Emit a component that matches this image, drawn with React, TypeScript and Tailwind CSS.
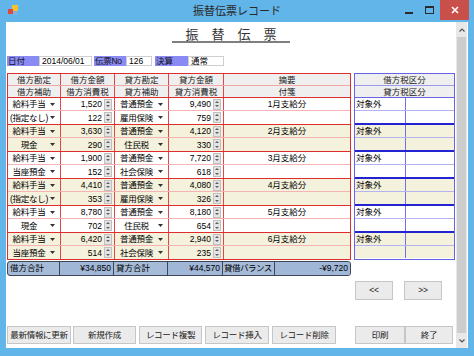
import React from 'react';

type Group = {
  dr: string;
  drAmt: string;
  cr: string;
  crAmt: string;
  memo: string;
  dr2: string;
  drTax: string;
  cr2: string;
  crTax: string;
};

const groups: Group[] = [
  { dr: '給料手当', drAmt: '1,520', cr: '普通預金', crAmt: '9,490', memo: '1月支給分', dr2: '(指定なし)', drTax: '122', cr2: '雇用保険', crTax: '759' },
  { dr: '給料手当', drAmt: '3,630', cr: '普通預金', crAmt: '4,120', memo: '2月支給分', dr2: '現金', drTax: '290', cr2: '住民税', crTax: '330' },
  { dr: '給料手当', drAmt: '1,900', cr: '普通預金', crAmt: '7,720', memo: '3月支給分', dr2: '当座預金', drTax: '152', cr2: '社会保険', crTax: '618' },
  { dr: '給料手当', drAmt: '4,410', cr: '普通預金', crAmt: '4,080', memo: '4月支給分', dr2: '(指定なし)', drTax: '353', cr2: '雇用保険', crTax: '326' },
  { dr: '給料手当', drAmt: '8,780', cr: '普通預金', crAmt: '8,180', memo: '5月支給分', dr2: '現金', drTax: '702', cr2: '住民税', crTax: '654' },
  { dr: '給料手当', drAmt: '6,420', cr: '普通預金', crAmt: '2,940', memo: '6月支給分', dr2: '当座預金', drTax: '514', cr2: '社会保険', crTax: '235' },
];

function Combo({ text, w }: { text: string; w: string }) {
  return (
    <div className={`${w} h-full flex items-center border-r border-[#e04848] pl-[1px] pr-[5px]`}>
      <span className="flex-1 text-center whitespace-nowrap tracking-[-0.3px]">{text}</span>
      <svg width="5" height="3" viewBox="0 0 5 3" className="shrink-0 ml-[1px]">
        <path d="M0 0h5L2.5 3z" fill="#333" />
      </svg>
    </div>
  );
}

function Spin() {
  return (
    <div className="w-[8px] h-[11px] flex flex-col border border-[#c0c0c0] bg-[#e4e4e4]">
      <div className="flex-1 flex items-center justify-center">
        <svg width="4" height="2" viewBox="0 0 4 2">
          <path d="M0 2L2 0L4 2z" fill="#606060" />
        </svg>
      </div>
      <div className="flex-1 flex items-center justify-center">
        <svg width="4" height="2" viewBox="0 0 4 2">
          <path d="M0 0h4L2 2z" fill="#606060" />
        </svg>
      </div>
    </div>
  );
}

function Amount({ value, w }: { value: string; w: string }) {
  return (
    <div className={`${w} h-full flex items-center justify-end gap-[2px] pr-[2px] border-r border-[#e04848]`}>
      <span>{value}</span>
      <Spin />
    </div>
  );
}

function Btn({ label, w }: { label: string; w: string }) {
  return (
    <button className={`${w} h-full flex items-center justify-center bg-[#ebebeb] border border-[#c6c6c6] text-[8.5px] text-[#222] whitespace-nowrap tracking-[-0.3px]`}>
      {label}
    </button>
  );
}

export default function App() {
  return (
    <div className="w-[474px] h-[356px] bg-[#62b5e9] flex flex-col overflow-hidden font-['Liberation_Sans','Noto_Sans_CJK_JP',sans-serif] text-[8.5px] text-black">
      {/* Title bar */}
      <div className="h-[22px] grid grid-cols-[1fr_auto_1fr] items-start">
        <div className="pl-[8px] pt-[5px]">
          <svg width="11" height="11" viewBox="0 0 11 11">
            <rect x="4" y="0" width="6" height="6" fill="#f4c430" />
            <rect x="0" y="4" width="5" height="5" fill="#e0483c" />
            <rect x="5" y="6" width="4" height="4" fill="#7fb2e0" />
          </svg>
        </div>
        <div className="pt-[5px] text-[11px] leading-[12px] text-[#2a2a2a]">振替伝票レコード</div>
        <div className="flex justify-end pr-[5px]">
          <div className="w-[21px] h-[20px] flex items-center justify-center">
            <svg width="8" height="8" viewBox="0 0 8 8">
              <rect x="0" y="6" width="8" height="2" fill="#2a2a2a" />
            </svg>
          </div>
          <div className="w-[21px] h-[20px] flex items-center justify-center">
            <svg width="9" height="8" viewBox="0 0 9 8">
              <rect x="0.5" y="0.5" width="8" height="7" fill="none" stroke="#2a2a2a" />
              <rect x="0" y="0" width="9" height="2" fill="#2a2a2a" />
            </svg>
          </div>
          <div className="w-[29px] h-[20px] bg-[#c9504a] flex items-center justify-center">
            <svg width="8" height="8" viewBox="0 0 8 8">
              <path d="M1 1L7 7M7 1L1 7" stroke="#fff" strokeWidth="1.6" />
            </svg>
          </div>
        </div>
      </div>

      {/* Client area */}
      <div className="flex-1 flex mx-[6px] mb-[8px] bg-white min-h-0">
        <div className="flex-1 flex flex-col pl-[1px]">
          {/* Heading */}
          <div className="flex justify-center pt-[5px] pr-[1px]">
            <div className="pl-[13px] border-b-2 border-[#7f7f7f] text-[13px] leading-[14px] tracking-[13px] text-[#333] font-['Noto_Sans_CJK_JP',sans-serif]">
              振替伝票
            </div>
          </div>

          {/* Header fields */}
          <div className="mt-[13px] h-[10px] flex items-stretch leading-[10px]">
            <div className="w-[32px] bg-[#8a8af4] pl-[1px] text-[#111]">日付</div>
            <div className="w-[53px] border border-[#cfcfcf] pl-[2px] leading-[8px]">2014/06/01</div>
            <div className="w-[32px] ml-[2px] bg-[#8a8af4] pl-[1px] text-[#111] tracking-[-0.3px]">伝票No</div>
            <div className="w-[26px] border border-[#cfcfcf] pl-[2px] leading-[8px]">126</div>
            <div className="w-[33px] ml-[3px] bg-[#8a8af4] pl-[1px] text-[#111]">決算</div>
            <div className="w-[36px] border border-[#cfcfcf] pl-[2px] leading-[8px]">通常</div>
          </div>

          {/* Tables */}
          <div className="mt-[7px] flex gap-[3px] leading-[12px]">
            {/* Left (red) table */}
            <div className="w-[344px] flex flex-col border border-[#e02c2c]">
              <div className="h-[12px] flex bg-[#efefef] border-b border-[#f2a6a6] text-[#222]">
                <div className="w-[53px] text-center border-r border-[#e04848]">借方勘定</div>
                <div className="w-[54px] text-center border-r border-[#e04848]">借方金額</div>
                <div className="w-[54px] text-center border-r border-[#e04848]">貸方勘定</div>
                <div className="w-[55px] text-center border-r border-[#e04848]">貸方金額</div>
                <div className="flex-1 text-center">摘要</div>
              </div>
              <div className="h-[12px] flex bg-[#efefef] border-b border-[#e02c2c] text-[#222]">
                <div className="w-[53px] text-center border-r border-[#e04848]">借方補助</div>
                <div className="w-[54px] text-center border-r border-[#e04848]">借方消費税</div>
                <div className="w-[54px] text-center border-r border-[#e04848]">貸方補助</div>
                <div className="w-[55px] text-center border-r border-[#e04848]">貸方消費税</div>
                <div className="flex-1 text-center">付箋</div>
              </div>
              {groups.map((g, i) => (
                <div
                  key={i}
                  className={`flex flex-col border-b border-[#e02c2c] last:border-b-0 ${i % 2 === 1 ? 'bg-[#f4f1dc]' : 'bg-white'}`}
                >
                  <div className="h-[13px] flex border-b border-[#f4b4b4]">
                    <Combo text={g.dr} w="w-[53px]" />
                    <Amount value={g.drAmt} w="w-[54px]" />
                    <Combo text={g.cr} w="w-[54px]" />
                    <Amount value={g.crAmt} w="w-[55px]" />
                    <div className="flex-1 flex items-center justify-center">{g.memo}</div>
                  </div>
                  <div className="h-[13px] flex">
                    <Combo text={g.dr2} w="w-[53px]" />
                    <Amount value={g.drTax} w="w-[54px]" />
                    <Combo text={g.cr2} w="w-[54px]" />
                    <Amount value={g.crTax} w="w-[55px]" />
                    <div className="flex-1" />
                  </div>
                </div>
              ))}
            </div>

            {/* Right (blue) table */}
            <div className="w-[101px] flex flex-col border border-[#6464e4]">
              <div className="h-[12px] bg-[#efefef] border-b border-[#9a9aec] text-center text-[#222]">借方税区分</div>
              <div className="h-[12px] bg-[#efefef] border-b border-[#6464e4] text-center text-[#222]">貸方税区分</div>
              {groups.map((_, i) => (
                <div
                  key={i}
                  className={`flex flex-col border-b-2 border-[#2323d2] last:border-b-0 ${i % 2 === 1 ? 'bg-[#f4f1dc]' : 'bg-white'}`}
                >
                  <div className="h-[13px] flex border-b border-[#b4b4f2]">
                    <div className="w-[51px] border-r border-[#7070ea] pl-[1px] flex items-center">対象外</div>
                    <div className="flex-1" />
                  </div>
                  <div className="h-[12px] flex">
                    <div className="w-[51px] border-r border-[#7070ea]" />
                    <div className="flex-1" />
                  </div>
                </div>
              ))}
            </div>
          </div>

          {/* Totals */}
          <div className="mt-[1px] w-[344px] h-[15px] flex rounded-[3px] border border-[#3e4656] bg-[#a6bbd7] leading-[13px] overflow-hidden whitespace-nowrap">
            <div className="w-[52px] pl-[2px] border-r border-[#3e4656]">借方合計</div>
            <div className="w-[54px] pr-[2px] text-right border-r border-[#3e4656] bg-[#a0b7d8]">¥34,850</div>
            <div className="w-[54px] pl-[2px] border-r border-[#3e4656]">貸方合計</div>
            <div className="w-[55px] pr-[2px] text-right border-r border-[#3e4656] bg-[#a0b7d8]">¥44,570</div>
            <div className="w-[52px] pl-[1px] border-r border-[#3e4656] tracking-[-0.5px]">貸借バランス</div>
            <div className="flex-1 pr-[2px] text-right bg-[#a0b7d8]">-¥9,720</div>
          </div>

          {/* Navigation */}
          <div className="mt-[5px] h-[19px] flex justify-end gap-[11px] pr-[14px]">
            <Btn label="<<" w="w-[38px]" />
            <Btn label=">>" w="w-[38px]" />
          </div>

          {/* Bottom buttons */}
          <div className="mt-[26px] h-[18px] flex">
            <Btn label="最新情報に更新" w="w-[64px]" />
            <div className="w-[2px]" />
            <Btn label="新規作成" w="w-[63px]" />
            <div className="w-[3px]" />
            <Btn label="レコード複製" w="w-[63px]" />
            <div className="w-[3px]" />
            <Btn label="レコード挿入" w="w-[64px]" />
            <div className="w-[3px]" />
            <Btn label="レコード削除" w="w-[64px]" />
            <div className="flex-1" />
            <Btn label="印刷" w="w-[50px]" />
            <Btn label="終了" w="w-[48px]" />
            <div className="w-[3px]" />
          </div>
        </div>

        {/* Scrollbar */}
        <div className="w-[11px] flex flex-col bg-[#e8e8e8] mr-[1px]">
          <div className="h-[15px] flex items-center justify-center">
            <svg width="6" height="4" viewBox="0 0 6 4">
              <path d="M0.5 3.5L3 1L5.5 3.5" fill="none" stroke="#555" strokeWidth="1.2" />
            </svg>
          </div>
          <div className="flex-1 mx-[1px] bg-[#cdcdcd]" />
          <div className="h-[15px] flex items-center justify-center">
            <svg width="6" height="4" viewBox="0 0 6 4">
              <path d="M0.5 0.5L3 3L5.5 0.5" fill="none" stroke="#555" strokeWidth="1.2" />
            </svg>
          </div>
        </div>
      </div>
    </div>
  );
}
